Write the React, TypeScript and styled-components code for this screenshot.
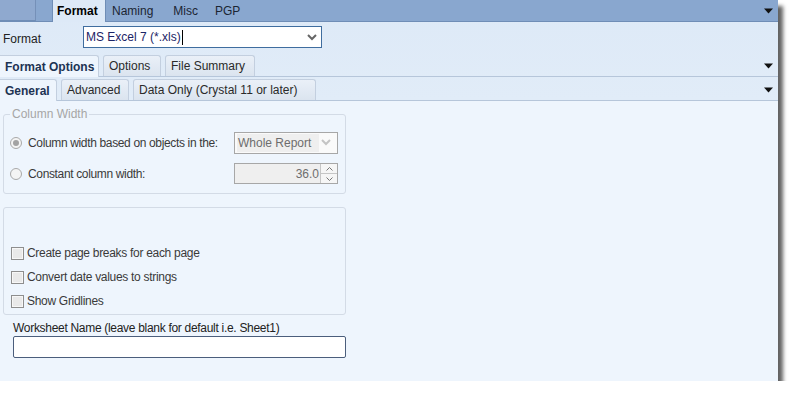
import styled, { createGlobalStyle } from 'styled-components';

const GlobalStyle = createGlobalStyle`
  html, body {
    margin: 0;
    padding: 0;
    background: #ffffff;
  }
  body {
    font-family: "Liberation Sans", Arial, sans-serif;
    font-size: 12px;
    color: #222;
  }
`;

const DownArrow = () => (
  <svg width="9" height="6" viewBox="0 0 9 6">
    <path d="M0 0.5 H9 L4.5 5.5 Z" fill="#111" />
  </svg>
);

const Chevron = ({ color }: { color: string }) => (
  <svg width="10" height="7" viewBox="0 0 10 7">
    <path d="M1 1 L5 5 L9 1" fill="none" stroke={color} strokeWidth="2" />
  </svg>
);

const App: React.FC = () => {
  return (
    <>
      <GlobalStyle />
      <Window>
        <TopBar>
          <TopStub />
          <TopTab active>Format</TopTab>
          <TopTab offset={6}>Naming</TopTab>
          <TopTab offset={20}>Misc</TopTab>
          <TopTab offset={17}>PGP</TopTab>
          <BarArrow>
            <DownArrow />
          </BarArrow>
        </TopBar>

        <FormatRow>
          <FieldLabel>Format</FieldLabel>
          <FormatSelect>
            <SelectText>
              MS Excel 7 (*.xls)<Caret />
            </SelectText>
            <Chevron color="#666" />
          </FormatSelect>
        </FormatRow>

        <TabStrip>
          <Tab active width={99}>Format Options</Tab>
          <Tab width={58}>Options</Tab>
          <Tab width={90}>File Summary</Tab>
          <BarArrow>
            <DownArrow />
          </BarArrow>
        </TabStrip>

        <TabStrip>
          <Tab active width={57}>General</Tab>
          <Tab width={68}>Advanced</Tab>
          <Tab width={183}>Data Only (Crystal 11 or later)</Tab>
          <BarArrow>
            <DownArrow />
          </BarArrow>
        </TabStrip>

        <Content>
          <GroupBox>
            <Legend>Column Width</Legend>
            <OptionRow>
              <Radio checked />
              <OptionLabel>Column width based on objects in the:</OptionLabel>
              <DisabledSelect>
                <span>Whole Report</span>
                <Chevron color="#c4c4c4" />
              </DisabledSelect>
            </OptionRow>
            <OptionRow>
              <Radio />
              <OptionLabel>Constant column width:</OptionLabel>
              <Spinner>
                <SpinValue>36.0</SpinValue>
                <SpinButtons>
                  <SpinButton>
                    <svg width="7" height="4" viewBox="0 0 7 4">
                      <path d="M0.5 3.5 L3.5 0.5 L6.5 3.5" fill="none" stroke="#777" />
                    </svg>
                  </SpinButton>
                  <SpinButton>
                    <svg width="7" height="4" viewBox="0 0 7 4">
                      <path d="M0.5 0.5 L3.5 3.5 L6.5 0.5" fill="none" stroke="#777" />
                    </svg>
                  </SpinButton>
                </SpinButtons>
              </Spinner>
            </OptionRow>
          </GroupBox>

          <CheckGroup>
            <CheckRow>
              <CheckBox />
              <span>Create page breaks for each page</span>
            </CheckRow>
            <CheckRow>
              <CheckBox />
              <span>Convert date values to strings</span>
            </CheckRow>
            <CheckRow>
              <CheckBox />
              <span>Show Gridlines</span>
            </CheckRow>
          </CheckGroup>

          <WorksheetLabel>Worksheet Name (leave blank for default i.e. Sheet1)</WorksheetLabel>
          <TextInput />
        </Content>
      </Window>
    </>
  );
};

const Window = styled.div`
  width: 778px;
  height: 381px;
  display: flex;
  flex-direction: column;
  background: linear-gradient(#dde9f7 0px, #e1ecf8 100px, #eef5fd 101px, #eef5fd 100%);
  box-shadow: 5px 6px 4px rgba(0, 0, 0, 0.62);
`;

const TopBar = styled.div`
  height: 22px;
  flex-shrink: 0;
  display: flex;
  align-items: stretch;
  background: #89a7cf;
  border-bottom: 1px solid #6f8db6;
  box-sizing: border-box;
  padding-right: 5px;
`;

const TopStub = styled.div`
  width: 35px;
  background: #8fa9cf;
  border-right: 1px solid #7590b8;
  border-bottom: 1px solid #6f8db6;
  margin-right: 16px;
`;

const TopTab = styled.div<{ active?: boolean; offset?: number }>`
  display: flex;
  align-items: center;
  margin-left: ${(p) => p.offset ?? 0}px;
  font-size: 12px;
  font-weight: ${(p) => (p.active ? 'bold' : 'normal')};
  color: ${(p) => (p.active ? '#000' : '#1b2533')};
  ${(p) =>
    p.active &&
    `
    width: 54px;
    box-sizing: border-box;
    padding-left: 4px;
    background: #dde9f7;
    margin-bottom: -1px;
    border-left: 1px solid #6f8db6;
    border-right: 1px solid #6f8db6;
  `}
`;

const BarArrow = styled.div`
  margin-left: auto;
  display: flex;
  align-items: center;
`;

const FormatRow = styled.div`
  height: 32px;
  flex-shrink: 0;
  display: flex;
  align-items: flex-start;
  padding: 4px 3px 0;
  box-sizing: border-box;
`;

const FieldLabel = styled.div`
  width: 80px;
  font-size: 12px;
  color: #222;
  padding-top: 6px;
`;

const FormatSelect = styled.div`
  width: 239px;
  height: 22px;
  box-sizing: border-box;
  border: 1px solid #3f6d9f;
  background: #fff;
  display: flex;
  align-items: center;
  justify-content: space-between;
  padding: 0 4px 0 2px;
`;

const SelectText = styled.span`
  display: flex;
  align-items: center;
  color: #1c2466;
  font-size: 12px;
`;

const Caret = styled.span`
  width: 1px;
  height: 15px;
  background: #000;
  margin-left: 1px;
`;

const TabStrip = styled.div`
  height: 23px;
  flex-shrink: 0;
  display: flex;
  align-items: flex-end;
  gap: 4px;
  border-bottom: 1px solid #b6c6da;
  box-sizing: border-box;
  padding-right: 5px;
  & + & {
    margin-top: 1px;
  }
  ${BarArrow} {
    align-self: center;
    padding-top: 1px;
  }
`;

const Tab = styled.div<{ active?: boolean; width: number }>`
  width: ${(p) => p.width}px;
  height: ${(p) => (p.active ? '22px' : '21px')};
  box-sizing: border-box;
  display: flex;
  align-items: center;
  padding-left: 5px;
  font-size: 12px;
  font-weight: ${(p) => (p.active ? 'bold' : 'normal')};
  color: ${(p) => (p.active ? '#1d3353' : '#2a2a2a')};
  border: 1px solid #c3cfdf;
  border-bottom: none;
  border-radius: 3px 3px 0 0;
  margin-bottom: ${(p) => (p.active ? '-1px' : '0')};
  background: ${(p) =>
    p.active ? '#eef5fd' : 'linear-gradient(#eaf0f8, #dbe4ef)'};
  &:first-child {
    border-left: none;
    border-top-left-radius: 0;
  }
`;

const Content = styled.div`
  flex: 1;
  display: flex;
  flex-direction: column;
  padding: 6px 0 0 3px;
`;

const GroupBox = styled.fieldset`
  width: 343px;
  box-sizing: border-box;
  margin: 0;
  padding: 11px 7px 6px 5px;
  border: 1px solid #d3dbe6;
  border-radius: 3px;
  display: flex;
  flex-direction: column;
  gap: 10px;
  height: 87px;
`;

const Legend = styled.legend`
  font-size: 12px;
  color: #a6a6a6;
  padding: 0 2px;
  margin-left: 1px;
`;

const OptionRow = styled.div`
  display: flex;
  align-items: center;
  height: 21px;
`;

const Radio = styled.span<{ checked?: boolean }>`
  width: 12px;
  height: 12px;
  box-sizing: border-box;
  border-radius: 50%;
  border: 1px solid #a9a9a9;
  background: #f4f4f4;
  position: relative;
  margin: 0 6px 0 1px;
  flex-shrink: 0;
  &::after {
    content: '';
    display: ${(p) => (p.checked ? 'block' : 'none')};
    position: absolute;
    left: 2px;
    top: 2px;
    width: 6px;
    height: 6px;
    border-radius: 50%;
    background: #a3a3a3;
  }
`;

const OptionLabel = styled.span`
  flex: 1;
  font-size: 12px;
  color: #3a3a3a;
  letter-spacing: -0.35px;
`;

const DisabledSelect = styled.div`
  width: 104px;
  height: 22px;
  box-sizing: border-box;
  border: 1px solid #a7a7a7;
  background: #fafafa;
  display: flex;
  align-items: center;
  justify-content: space-between;
  padding: 0 6px 0 2px;
  color: #6d6d6d;
  font-size: 12px;
  span {
    background: #efefef;
    padding: 2px 1px;
    width: 80px;
  }
`;

const Spinner = styled.div`
  width: 104px;
  height: 21px;
  box-sizing: border-box;
  border: 1px solid #a7a7a7;
  background: #efefef;
  display: flex;
  align-items: stretch;
`;

const SpinValue = styled.div`
  flex: 1;
  display: flex;
  align-items: center;
  justify-content: flex-end;
  padding-right: 1px;
  color: #6d6d6d;
  font-size: 12px;
`;

const SpinButtons = styled.div`
  width: 16px;
  display: flex;
  flex-direction: column;
  border-left: 1px solid #c6c6c6;
`;

const SpinButton = styled.div`
  flex: 1;
  display: flex;
  align-items: center;
  justify-content: center;
  background: #f6f6f6;
  & + & {
    border-top: 1px solid #c6c6c6;
  }
`;

const CheckGroup = styled.div`
  width: 343px;
  height: 108px;
  box-sizing: border-box;
  margin-top: 13px;
  border: 1px solid #d3dbe6;
  border-radius: 3px;
  display: flex;
  flex-direction: column;
  justify-content: flex-end;
  gap: 10px;
  padding: 0 0 6px 7px;
`;

const CheckRow = styled.div`
  display: flex;
  align-items: center;
  height: 14px;
  font-size: 12px;
  color: #3a3a3a;
  letter-spacing: -0.3px;
`;

const CheckBox = styled.span`
  width: 13px;
  height: 13px;
  box-sizing: border-box;
  border: 1px solid #8e8e8e;
  background: #e9e9e9;
  box-shadow: inset 0 0 0 1px #f7f7f7;
  margin-right: 3px;
  flex-shrink: 0;
`;

const WorksheetLabel = styled.div`
  margin: 6px 0 0 10px;
  font-size: 12px;
  color: #222;
  letter-spacing: -0.3px;
`;

const TextInput = styled.div`
  width: 333px;
  height: 22px;
  box-sizing: border-box;
  margin: 1px 0 0 10px;
  border: 1px solid #4b5e7c;
  border-radius: 2px;
  background: #fff;
`;

export default App;
